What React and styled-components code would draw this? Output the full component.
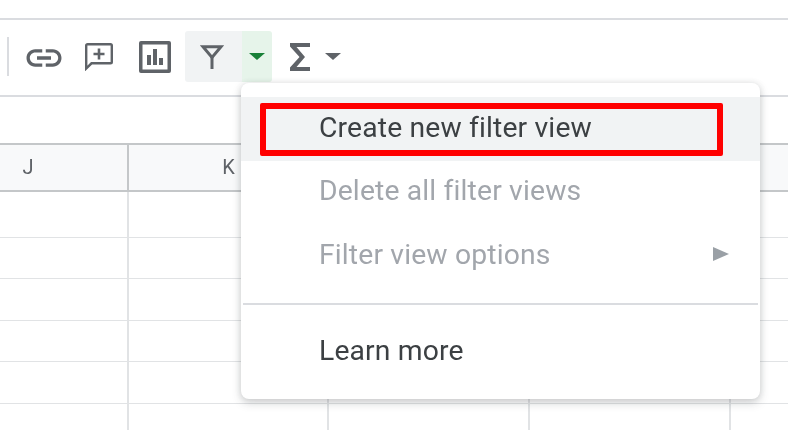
import React from 'react';
import styled, { createGlobalStyle } from 'styled-components';

const GlobalStyle = createGlobalStyle`
  html, body {
    margin: 0;
    padding: 0;
    background: #fff;
    overflow: hidden;
  }
  body {
    font-family: Roboto, "Liberation Sans", sans-serif;
  }
`;

const Page = styled.div`
  position: relative;
  width: 788px;
  height: 430px;
  overflow: hidden;
  background: #fff;
  filter: blur(0.45px);
`;

const TopStrip = styled.div`
  box-sizing: border-box;
  height: 20px;
  border-bottom: 2px solid #dadce0;
`;

const Toolbar = styled.div`
  box-sizing: border-box;
  height: 77px;
  display: flex;
  align-items: center;
  padding: 0 0 2px 7px;
  border-bottom: 2px solid #dadce0;
`;

const Separator = styled.div`
  width: 2px;
  height: 39px;
  margin-right: 8px;
  background: #dadce0;
`;

const ToolButton = styled.div`
  box-sizing: border-box;
  width: ${props => props.width}px;
  height: 51px;
  margin-left: ${props => props.offset || 0}px;
  padding: ${props => props.inset || '0'};
  display: flex;
  align-items: center;
  justify-content: center;
  background: ${props => props.bg || 'transparent'};
  border-radius: ${props => props.radius || '0'};
`;

const Caret = styled.div`
  width: 0;
  height: 0;
  border-left: 8px solid transparent;
  border-right: 8px solid transparent;
  border-top: 7px solid ${props => props.color};
`;

const Gap = styled.div`
  height: 46px;
`;

const Sheet = styled.div`
  display: grid;
  grid-template-columns: 201px 200px 201px 201px 200px;
  grid-template-rows: 49px 46px 41px 41.5px 41.5px 42px 40px;
  margin-left: -72px;
  width: 1003px;
`;

const HeaderCell = styled.div`
  box-sizing: border-box;
  display: flex;
  align-items: center;
  justify-content: center;
  padding: 0 0 1px 1px;
  background: #f8f9fa;
  border-top: 2px solid #c4c7c9;
  border-bottom: 2px solid #c4c7c9;
  border-right: 2px solid #c4c7c9;
  color: #5f6368;
  font-size: 20px;
`;

const Cell = styled.div`
  box-sizing: border-box;
  border-right: 2px solid #e1e3e5;
  border-bottom: 1.5px solid #e1e3e5;
`;

const Menu = styled.div`
  position: absolute;
  left: 241px;
  top: 83px;
  box-sizing: border-box;
  width: 519px;
  height: 316px;
  padding-top: 14px;
  background: #fff;
  border-radius: 8px;
  box-shadow: 0 4px 10px rgba(60, 64, 67, 0.22), 0 0 6px rgba(60, 64, 67, 0.12);
`;

const MenuItem = styled.div`
  position: relative;
  box-sizing: border-box;
  height: 63.5px;
  display: flex;
  align-items: center;
  justify-content: space-between;
  padding: 0 31px 3px 78px;
  font-size: 28.3px;
  letter-spacing: 0.15px;
  color: ${props => props.disabled ? '#a2a6ac' : '#3c4043'};
  background: ${props => props.active ? '#f1f3f4' : 'transparent'};
`;

const Highlight = styled.div`
  position: absolute;
  left: 19px;
  top: 6px;
  box-sizing: border-box;
  width: 463px;
  height: 53px;
  border: 6px solid #ff0000;
  border-radius: 2px;
`;

const SubArrow = styled.div`
  width: 0;
  height: 0;
  border-top: 7.5px solid transparent;
  border-bottom: 7.5px solid transparent;
  border-left: 16px solid #9aa0a6;
`;

const Divider = styled.div`
  height: 2px;
  margin: 15px 2px 16px;
  background: #dadce0;
`;

const LinkIcon = () => (
  <svg width="42" height="42" viewBox="0 0 24 24" fill="#5f6368">
    <path d="M3.9 12c0-1.71 1.39-3.1 3.1-3.1h4V7H7c-2.76 0-5 2.24-5 5s2.24 5 5 5h4v-1.9H7c-1.71 0-3.1-1.39-3.1-3.1zM8 13h8v-2H8v2zm9-6h-4v1.9h4c1.71 0 3.1 1.39 3.1 3.1s-1.39 3.1-3.1 3.1h-4V17h4c2.76 0 5-2.24 5-5s-2.24-5-5-5z" />
  </svg>
);

const CommentIcon = () => (
  <svg width="28" height="28" viewBox="0 0 28 28" fill="none" stroke="#5f6368">
    <path d="M2.5 1.2h23a1.3 1.3 0 0 1 1.3 1.3v16.5a1.3 1.3 0 0 1-1.3 1.3H6.5L1.2 25.5V2.5a1.3 1.3 0 0 1 1.3-1.3z" strokeWidth="2.4" />
    <path d="M14 5.5v11M8.5 11h11" strokeWidth="2.6" />
  </svg>
);

const ChartIcon = () => (
  <svg width="32" height="32" viewBox="0 0 32 32" fill="#5f6368">
    <path fillRule="evenodd" d="M2 0h28a2 2 0 0 1 2 2v28a2 2 0 0 1-2 2H2a2 2 0 0 1-2-2V2a2 2 0 0 1 2-2zm1.5 3.5v25h25v-25z" />
    <rect x="8" y="14" width="4" height="10" />
    <rect x="14" y="8" width="4" height="16" />
    <rect x="20" y="17" width="4" height="7" />
  </svg>
);

const FilterIcon = () => (
  <svg width="24" height="24" viewBox="0 0 24 24" fill="none" stroke="#5f6368" strokeWidth="3">
    <path d="M3 1.8h18L12 12.5z" />
    <path d="M12 12v12" />
  </svg>
);

const SigmaIcon = () => (
  <svg width="20" height="28" viewBox="0 0 20 28" fill="#5f6368">
    <path d="M0 0h20v4H6.5l8.5 10-8.5 10H20v4H0v-3.5L9.5 14 0 3.5z" />
  </svg>
);

const columns = ['J', 'K', '', '', ''];
const rows = [0, 1, 2, 3, 4, 5];

const App = () => (
  <Page>
    <GlobalStyle />
    <TopStrip />
    <Toolbar>
      <Separator />
      <ToolButton width={54} inset="2px 0 0"><LinkIcon /></ToolButton>
      <ToolButton width={56}><CommentIcon /></ToolButton>
      <ToolButton width={56}><ChartIcon /></ToolButton>
      <ToolButton width={57} offset={2} inset="1px 3px 0 0" bg="#f1f3f4" radius="3px 0 0 3px"><FilterIcon /></ToolButton>
      <ToolButton width={30} bg="#e6f4ea" radius="0 3px 3px 0"><Caret color="#188038" /></ToolButton>
      <ToolButton width={50} offset={3}><SigmaIcon /></ToolButton>
      <ToolButton width={16}><Caret color="#5f6368" /></ToolButton>
    </Toolbar>
    <Gap />
    <Sheet>
      {columns.map((name, i) => <HeaderCell key={i}>{name}</HeaderCell>)}
      {rows.map(row => columns.map((_, i) => <Cell key={`${row}-${i}`} />))}
    </Sheet>
    <Menu>
      <MenuItem active>
        Create new filter view
        <Highlight />
      </MenuItem>
      <MenuItem disabled>Delete all filter views</MenuItem>
      <MenuItem disabled>
        Filter view options
        <SubArrow />
      </MenuItem>
      <Divider />
      <MenuItem>Learn more</MenuItem>
    </Menu>
  </Page>
);

export default App;
